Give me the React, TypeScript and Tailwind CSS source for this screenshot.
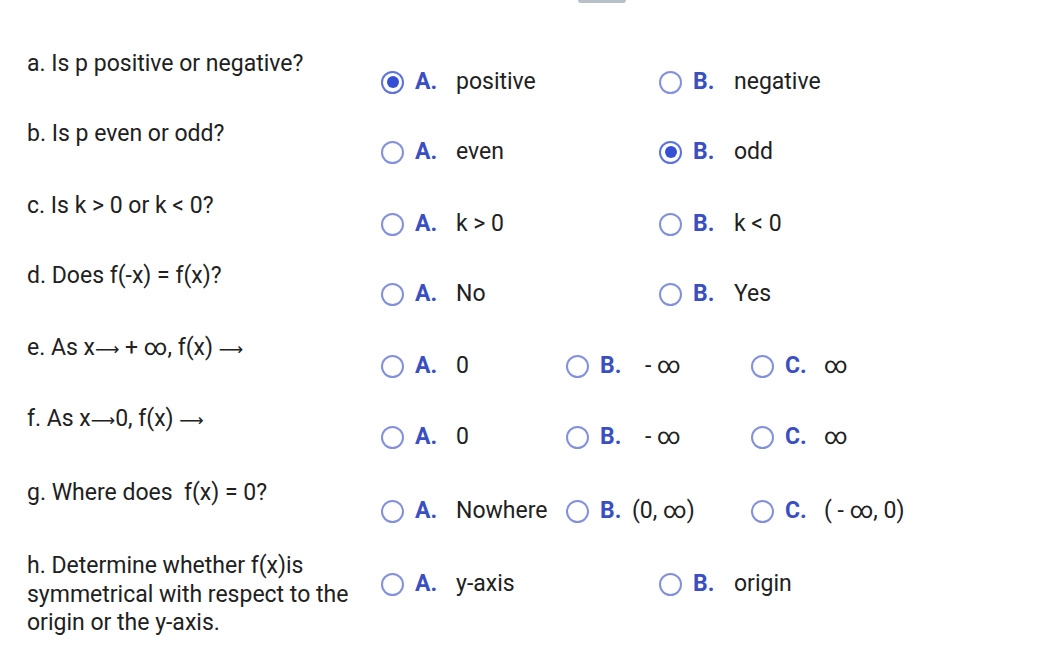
import { useState, type ReactNode } from "react";

type Option = { label: string; text: string; slot?: string };
type Question = { id: string; prompt: ReactNode[]; options: Option[]; cols: "two" | "three"; row: string };

function Arrow() {
  return <span className="font-['DejaVu_Sans',sans-serif] text-[17px] leading-none">{"\u27f6"}</span>;
}

const questions: Question[] = [
  { id: "a", prompt: ["a. Is p positive or negative?"], cols: "two", row: "h-[70px]", options: [{ label: "A.", text: "positive" }, { label: "B.", text: "negative" }] },
  { id: "b", prompt: ["b. Is p even or odd?"], cols: "two", row: "h-[72px]", options: [{ label: "A.", text: "even" }, { label: "B.", text: "odd" }] },
  { id: "c", prompt: ["c. Is k > 0 or k < 0?"], cols: "two", row: "h-[70px]", options: [{ label: "A.", text: "k > 0" }, { label: "B.", text: "k < 0" }] },
  { id: "d", prompt: ["d. Does f(-x) = f(x)?"], cols: "two", row: "h-[72px]", options: [{ label: "A.", text: "No" }, { label: "B.", text: "Yes" }] },
  {
    id: "e",
    prompt: [<>e. As x<Arrow /> + {"\u221e"}, f(x) <Arrow /></>],
    cols: "three",
    row: "h-[71px]",
    options: [{ label: "A.", text: "0" }, { label: "B.", text: "- \u221e", slot: "w-[45px]" }, { label: "C.", text: "\u221e", slot: "w-[39px]" }],
  },
  {
    id: "f",
    prompt: [<>f. As x<Arrow />0, f(x) <Arrow /></>],
    cols: "three",
    row: "h-[74px]",
    options: [{ label: "A.", text: "0" }, { label: "B.", text: "- \u221e", slot: "w-[45px]" }, { label: "C.", text: "\u221e", slot: "w-[39px]" }],
  },
  {
    id: "g",
    prompt: ["g. Where does\u00a0 f(x) = 0?"],
    cols: "three",
    row: "h-[73px]",
    options: [{ label: "A.", text: "Nowhere" }, { label: "B.", text: "(0, \u221e)", slot: "w-[32px]" }, { label: "C.", text: "( - \u221e, 0)", slot: "w-[39px]" }],
  },
  {
    id: "h",
    prompt: ["h. Determine whether f(x)is", "symmetrical with respect to the", "origin or the y-axis."],
    cols: "two",
    row: "h-[99px]",
    options: [{ label: "A.", text: "y-axis" }, { label: "B.", text: "origin" }],
  },
];

function Radio({ checked }: { checked: boolean }) {
  return (
    <span className={`flex h-[23px] w-[23px] shrink-0 items-center justify-center rounded-full border-2 ${checked ? "border-[#5d72dc]" : "border-[#8390dc]"}`}>
      {checked ? <span className="h-[12px] w-[12px] rounded-full bg-[#3550d4]" /> : null}
    </span>
  );
}

export default function App() {
  const [answers, setAnswers] = useState<Record<string, number>>({ a: 0, b: 1 });

  return (
    <div className="relative h-[650px] w-[1043px] overflow-hidden bg-white font-['Roboto',sans-serif] text-[23px] text-[#212121]">
      <div className="ml-[578px] h-[3px] w-[48px] rounded-b bg-[#b7c0c8]" />
      <div className="mt-[47px] pl-[27px]">
        {questions.map((q) => (
          <div key={q.id} className={`flex items-start ${q.row}`}>
            <div className="w-[354px] shrink-0 leading-[28.5px]">
              {q.prompt.map((line, i) => (
                <div key={i} className="whitespace-pre">{line}</div>
              ))}
            </div>
            <div className="mt-[18px] flex">
              {q.options.map((opt, i) => (
                <button
                  key={opt.label}
                  onClick={() => setAnswers({ ...answers, [q.id]: i })}
                  className={`flex items-center text-left leading-[28px] ${q.cols === "two" ? "w-[278px]" : "w-[185px]"}`}
                >
                  <Radio checked={answers[q.id] === i} />
                  <span className={`ml-[11px] shrink-0 font-bold text-[#3a4fc0] ${opt.slot ?? "w-[41px]"}`}>{opt.label}</span>
                  <span className="whitespace-pre">{opt.text}</span>
                </button>
              ))}
            </div>
          </div>
        ))}
      </div>
    </div>
  );
}
